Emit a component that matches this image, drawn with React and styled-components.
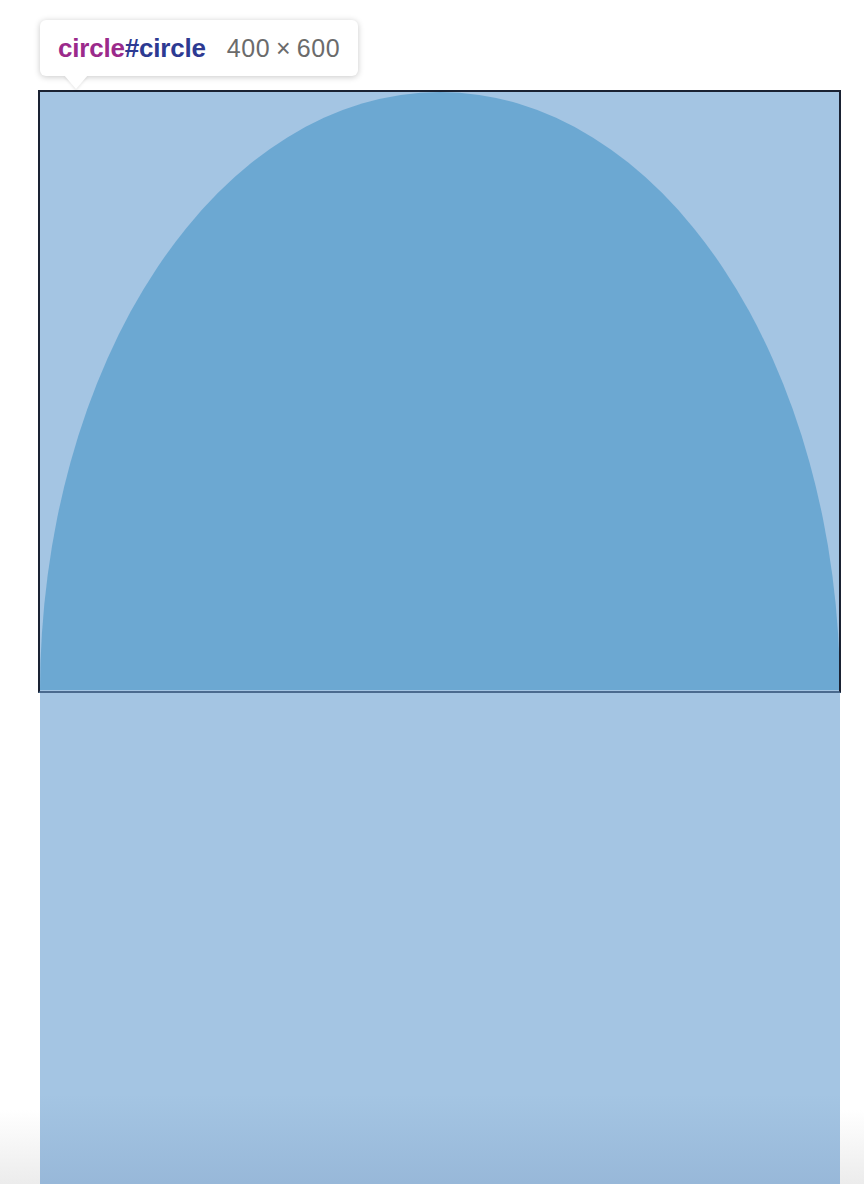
import React from "react";
import styled, { createGlobalStyle } from "styled-components";

const Global = createGlobalStyle`
  html, body { margin: 0; padding: 0; background: #ffffff; }
  body { font-family: "Liberation Sans", Arial, sans-serif; overflow: hidden; }
`;

const Page = styled.div`
  width: 864px;
  height: 1184px;
  position: relative;
  overflow: hidden;
  padding: 90px 24px 0 40px;
  box-sizing: border-box;
  background: linear-gradient(to bottom, #ffffff 0, #ffffff 1110px, #ececec 1184px);
`;

const Stage = styled.div`
  position: relative;
  width: 800px;
  height: 1200px;
  background: #a4c5e3;
`;

const Art = styled.svg`
  display: block;
  width: 800px;
  height: 600px;
`;

const Highlight = styled.div`
  position: absolute;
  left: -2px;
  top: 0;
  width: 803px;
  height: 603px;
  box-sizing: border-box;
  border: 2px solid #1a2233;
  border-bottom-color: #4a6a8e;
  pointer-events: none;
`;

const Fade = styled.div`
  position: absolute;
  left: 0;
  right: 0;
  bottom: 0;
  height: 90px;
  background: linear-gradient(to bottom, rgba(120, 150, 190, 0), rgba(120, 150, 190, 0.28));
  pointer-events: none;
`;

const Tooltip = styled.div`
  position: absolute;
  left: 40px;
  top: 20px;
  height: 56px;
  padding: 0 18px;
  display: flex;
  align-items: center;
  gap: 21px;
  background: #ffffff;
  border-radius: 6px;
  box-shadow: 0 1px 6px rgba(0, 0, 0, 0.22);
  font-size: 26px;
  letter-spacing: -0.2px;

  &::after {
    content: "";
    position: absolute;
    left: 24px;
    bottom: -13px;
    width: 0;
    height: 0;
    border-left: 12px solid transparent;
    border-right: 12px solid transparent;
    border-top: 14px solid #ffffff;
    filter: drop-shadow(0 2px 1px rgba(0, 0, 0, 0.08));
  }
`;

const Selector = styled.span`
  font-weight: 700;
  color: #9b2a8b;
`;

const Id = styled.span`
  color: #2d3a92;
`;

const Size = styled.span`
  color: #6b6b6b;
  font-weight: 400;
  font-size: 25px;
  letter-spacing: 0.6px;
`;

export default function App() {
  return (
    <>
      <Global />
      <Page>
        <Stage>
          <Art viewBox="0 0 800 600" preserveAspectRatio="none">
            <ellipse cx="400" cy="602" rx="400" ry="600" fill="#6ca8d2" />
          </Art>
          <Highlight />
          <Fade style={{ top: 1004, bottom: "auto" }} />
        </Stage>
        <Tooltip>
          <Selector>
            circle<Id>#circle</Id>
          </Selector>
          <Size>{"400\u2009×\u2009600"}</Size>
        </Tooltip>
      </Page>
    </>
  );
}
